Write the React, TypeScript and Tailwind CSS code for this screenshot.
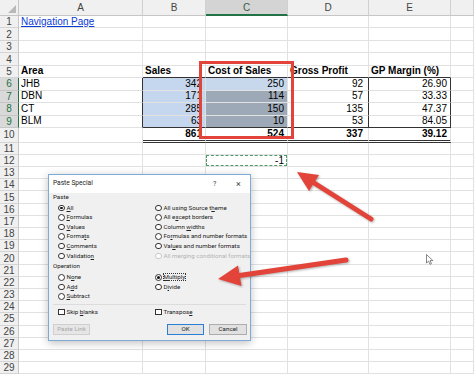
import React from "react";

type Cell = { t: string; b?: boolean; r?: boolean; link?: boolean };

const cols = ["A", "B", "C", "D", "E", "F"];
const rows = Array.from({ length: 29 }, (_, i) => i + 1);

const data: Record<string, Cell> = {
  A1: { t: "Navigation Page", link: true },
  A5: { t: "Area", b: true },
  B5: { t: "Sales", b: true },
  C5: { t: "Cost of Sales", b: true },
  D5: { t: "Gross Profit", b: true },
  E5: { t: "GP Margin (%)", b: true },
  A6: { t: "JHB" },
  A7: { t: "DBN" },
  A8: { t: "CT" },
  A9: { t: "BLM" },
  B6: { t: "342", r: true },
  B7: { t: "171", r: true },
  B8: { t: "285", r: true },
  B9: { t: "63", r: true },
  C6: { t: "250", r: true },
  C7: { t: "114", r: true },
  C8: { t: "150", r: true },
  C9: { t: "10", r: true },
  D6: { t: "92", r: true },
  D7: { t: "57", r: true },
  D8: { t: "135", r: true },
  D9: { t: "53", r: true },
  E6: { t: "26.90", r: true },
  E7: { t: "33.33", r: true },
  E8: { t: "47.37", r: true },
  E9: { t: "84.05", r: true },
  B10: { t: "861", r: true, b: true },
  C10: { t: "524", r: true, b: true },
  D10: { t: "337", r: true, b: true },
  E10: { t: "39.12", r: true, b: true },
  C12: { t: "-1", r: true },
};

const inBox = (c: string) => ["B", "C", "D", "E"].includes(c);

const cellClass = (c: string, r: number) => {
  let cls =
    "relative flex items-center whitespace-nowrap border-r border-b px-[2px] ";
  // fills of the selected range
  if (c === "B" && r >= 6 && r <= 9) cls += "bg-[#c5d7ee] ";
  else if (c === "C" && r === 6) cls += "bg-[#c8d8ec] ";
  else if (c === "C" && r >= 7 && r <= 9) cls += "bg-[#9ea9b8] ";
  else cls += "bg-white ";

  // right border colour
  if ((c === "A" || c === "D" || c === "E") && r >= 6 && r <= 9)
    cls += "border-r-[#333] ";
  else cls += "border-r-[#e1e1e1] ";

  // bottom border colour
  if (inBox(c) && (r === 5 || r === 9)) cls += "border-b-[#333] ";
  else if (inBox(c) && r === 10)
    cls += "border-double border-b-[3px] border-b-[#333] ";
  else cls += "border-b-[#e1e1e1] ";

  if (c === "D") cls += "pr-[5px] ";
  else cls += "pr-[3px] ";
  return cls;
};

const Radio = ({
  on,
  label,
  dim,
  focus,
}: {
  on?: boolean;
  label: React.ReactNode;
  dim?: boolean;
  focus?: boolean;
}) => (
  <div className="flex h-[9.6px] items-center gap-[2px]">
    <span
      className={`flex h-[6.5px] w-[6.5px] shrink-0 items-center justify-center rounded-full border bg-white ${
        dim ? "border-[#c8c8c8]" : "border-[#333]"
      }`}
    >
      {on && <span className="h-[2.6px] w-[2.6px] rounded-full bg-[#111]" />}
    </span>
    <span
      className={`whitespace-nowrap leading-none ${
        dim ? "text-[#b4b4b4]" : "text-[#222]"
      } ${focus ? "outline outline-1 outline-dotted outline-[#333]" : ""}`}
    >
      {label}
    </span>
  </div>
);

const Check = ({ label }: { label: React.ReactNode }) => (
  <div className="flex h-[9.6px] items-center gap-[2px]">
    <span className="h-[6.5px] w-[6.5px] shrink-0 border border-[#333] bg-white" />
    <span className="whitespace-nowrap leading-none text-[#222]">{label}</span>
  </div>
);

const PasteSpecial = () => (
  <div className="absolute left-[48px] top-[174px] flex h-[167px] w-[203px] flex-col border border-[#7eaad6] bg-[#f0f0f0] font-['Roboto',sans-serif] text-[6.2px] shadow-[0_2px_8px_rgba(0,0,0,0.25)]">
    <div className="flex h-[18px] items-center bg-white pl-[4px] text-[6.6px] text-[#222]">
      <span className="flex-1">Paste Special</span>
      <span className="w-[23px] text-[7px] text-[#444]">?</span>
      <span className="w-[14px] text-[9px] leading-none text-[#444]">×</span>
    </div>
    <div className="flex flex-1 flex-col px-[4px]">
      <div className="flex h-[8px] items-center pt-[1px] text-[#222]">Paste</div>
      <div className="mt-[2px] grid grid-cols-[97px_1fr] pl-[5px]">
        <div className="flex flex-col">
          <Radio on label={<><u>A</u>ll</>} />
          <Radio label={<><u>F</u>ormulas</>} />
          <Radio label={<><u>V</u>alues</>} />
          <Radio label={<>Forma<u>t</u>s</>} />
          <Radio label={<><u>C</u>omments</>} />
          <Radio label={<>Validatio<u>n</u></>} />
        </div>
        <div className="flex flex-col">
          <Radio label={<>All using Source t<u>h</u>eme</>} />
          <Radio label={<>All e<u>x</u>cept borders</>} />
          <Radio label={<>Column <u>w</u>idths</>} />
          <Radio label={<>Fo<u>r</u>mulas and number formats</>} />
          <Radio label={<>Val<u>u</u>es and number formats</>} />
          <Radio dim label={<>All mergin<u>g</u> conditional formats</>} />
        </div>
      </div>
      <div className="mt-[2px] flex h-[9px] items-center text-[#222]">Operation</div>
      <div className="mt-[1px] grid grid-cols-[97px_1fr] pl-[5px]">
        <div className="flex flex-col">
          <Radio label={<>N<u>o</u>ne</>} />
          <Radio label={<>A<u>d</u>d</>} />
          <Radio label={<><u>S</u>ubtract</>} />
        </div>
        <div className="flex flex-col">
          <Radio on focus label={<><u>M</u>ultiply</>} />
          <Radio label={<>D<u>i</u>vide</>} />
        </div>
      </div>
      <div className="mt-[3px] h-px bg-[#dcdcdc]" />
      <div className="mt-[2px] grid grid-cols-[97px_1fr] pl-[5px]">
        <Check label={<>Skip <u>b</u>lanks</>} />
        <Check label={<>Transpos<u>e</u></>} />
      </div>
      <div className="mt-[7px] flex items-center">
        <div className="flex h-[11px] w-[37px] items-center justify-center border border-[#cfcfcf] bg-[#e6e6e6] text-[#a8a8a8]">
          Paste Link
        </div>
        <div className="flex-1" />
        <div className="flex h-[11px] w-[37px] items-center justify-center border border-[#2a7fd4] bg-[#e1e1e1] text-[#222]">
          OK
        </div>
        <div className="ml-[5px] mr-[-1px] flex h-[11px] w-[38px] items-center justify-center border border-[#adadad] bg-[#e1e1e1] text-[#222]">
          Cancel
        </div>
      </div>
    </div>
  </div>
);

const Arrows = () => (
  <svg
    className="pointer-events-none absolute left-0 top-0 h-[376px] w-[474px] drop-shadow-[1px_1px_1px_rgba(0,0,0,0.3)]"
    viewBox="0 0 474 376"
  >
    <line x1="371" y1="219" x2="311" y2="181" stroke="#e3443a" strokeWidth="5" strokeLinecap="round" />
    <polygon points="297,172 319,175 309,191" fill="#e3443a" />
    <line x1="346" y1="260" x2="236" y2="276" stroke="#e3443a" strokeWidth="5" strokeLinecap="round" />
    <polygon points="218,279 238,265.5 241.5,286" fill="#e3443a" />
  </svg>
);

export default function App() {
  return (
    <div className="relative h-[376px] w-[474px] overflow-hidden bg-white font-['Liberation_Sans',Arial,sans-serif] text-[10px] text-black">
      <div className="grid grid-cols-[19px_124px_63px_82px_81px_82px_1fr] grid-rows-[16px_repeat(9,12.45px)_14.8px_repeat(19,12.2px)]">
        {/* corner */}
        <div className="relative border-r border-b border-[#c6c6c6] bg-[#f0f0f0]">
          <svg className="absolute bottom-[2px] right-[2px] h-[8px] w-[8px]" viewBox="0 0 8 8">
            <polygon points="8,0 8,8 0,8" fill="#b9b9b9" />
          </svg>
        </div>
        {cols.map((c) => (
          <div
            key={c}
            className={`flex items-center justify-center border-r border-[#d0d0d0] ${
              c === "C"
                ? "border-b-2 border-b-[#217346] bg-[#d4d4d4] text-[#3b5a45]"
                : "border-b border-b-[#c6c6c6] bg-[#f0f0f0] text-[#444]"
            }`}
          >
            {c === "F" ? "" : c}
          </div>
        ))}
        {rows.map((r) => (
          <React.Fragment key={r}>
            <div
              className={`flex items-center justify-center border-b border-r ${
                r >= 6 && r <= 9
                  ? "border-b-[#c6c6c6] border-r-[#217346] bg-[#d9d9d9] text-[#217346]"
                  : "border-b-[#d4d4d4] border-r-[#c6c6c6] bg-[#f0f0f0] text-[#444]"
              }`}
            >
              {r}
            </div>
            {cols.map((c) => {
              const d = data[c + r];
              return (
                <div key={c} className={cellClass(c, r)}>
                  {c === "C" && r === 12 && (
                    <span className="absolute inset-0 border border-dashed border-[#4f9a68]" />
                  )}
                  {d && (
                    <span
                      className={`${d.r ? "ml-auto" : ""} ${
                        d.b ? "font-bold" : ""
                      } ${d.link ? "text-[#0b3bd6] underline" : ""} leading-none`}
                    >
                      {d.t}
                    </span>
                  )}
                </div>
              );
            })}
          </React.Fragment>
        ))}
      </div>

      {/* red highlight box */}
      <div className="absolute left-[199px] top-[61px] h-[78px] w-[95px] border-[3px] border-[#e3443a]" />

      <PasteSpecial />
      <Arrows />

      {/* mouse pointer */}
      <svg className="absolute left-[426px] top-[254px] h-[11px] w-[8px]" viewBox="0 0 8 11">
        <path d="M0.5 0.5 L0.5 9 L2.6 7.1 L4 10.3 L5.4 9.7 L4.1 6.6 L6.9 6.6 Z" fill="#fff" stroke="#555" strokeWidth="0.7" />
      </svg>
    </div>
  );
}
